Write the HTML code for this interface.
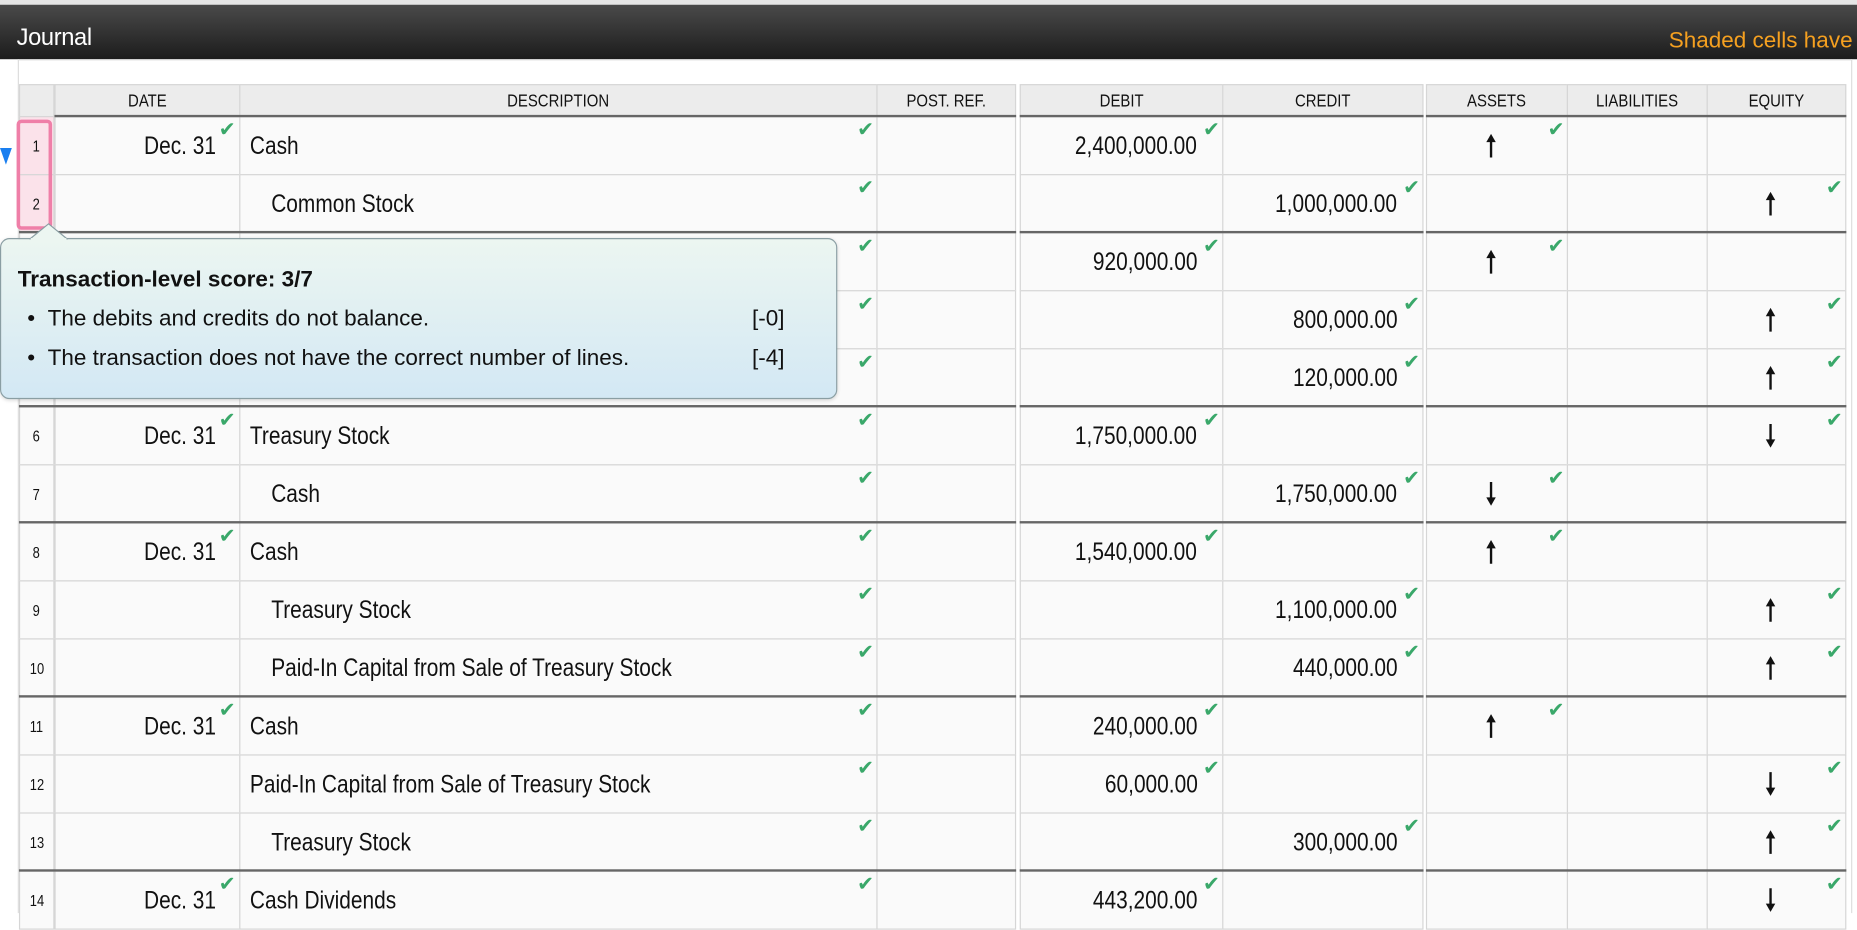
<!DOCTYPE html>
<html><head><meta charset="utf-8"><style>
html,body{margin:0;padding:0;width:1857px;height:901px;overflow:hidden;background:#fff}
#w{position:absolute;left:0;top:0;width:1568px;height:761px;transform:scale(1.18431);transform-origin:0 0;font-family:"Liberation Sans",sans-serif}
.bar{position:absolute;left:0;top:4px;width:1568px;height:46px;background:linear-gradient(#4a4a4a,#1c1c1c)}
.bar .t{position:absolute;left:14px;top:17px;color:#fff;font-size:20px;letter-spacing:-0.3px}
.bar .o{position:absolute;left:1409px;top:20px;color:#f5a020;font-size:19px;white-space:nowrap}
.c{position:absolute;box-sizing:border-box;border:1px solid #d6d6d6;background:#fafafa;height:50px;font-size:21px;line-height:49px;color:#111;white-space:nowrap}
.s{display:inline-block;transform:scaleX(.84);transform-origin:left center}
.c1 .s,.c4 .s,.c5 .s{transform-origin:right center}
.h{background:#ececec;height:28px;line-height:27px;font-size:15px;text-align:center!important;top:71px;padding:0!important}
.h .s{transform-origin:center center}
.c0{left:16px;width:30px;text-align:center;font-size:13px}
.c0 .s{transform-origin:center center}
.c1{left:46px;width:157px;text-align:right;padding-right:20px}
.c2{left:202px;width:539px;padding-left:8px}
.c3{left:740px;width:118px}
.c4{left:861px;width:172px;text-align:right;padding-right:21px}
.c5{left:1032px;width:170px;text-align:right;padding-right:21px}
.c6{left:1204px;width:120px}
.c7{left:1323px;width:119px}
.c8{left:1441px;width:118px}
.in{padding-left:26px}
.k{position:absolute;right:2px;top:-13px;color:#3aa86a;font-size:17px;font-family:"DejaVu Sans",sans-serif}
.c1 .k{right:3px}
.u,.d{position:absolute;top:13px;width:10px;height:22px}
.c6 .u,.c6 .d{left:49px}
.c8 .u,.c8 .d{left:48px}
.L{position:absolute;height:2px;background:#666}
</style></head><body><div id="w">
<svg width="0" height="0" style="position:absolute"><defs>
<symbol id="up" viewBox="0 0 10 22"><path d="M5 21V4" stroke="#111" stroke-width="2" fill="none"/><path d="M1 8L5 1L9 8Z" fill="#111"/></symbol>
<symbol id="dn" viewBox="0 0 10 22"><path d="M5 1V18" stroke="#111" stroke-width="2" fill="none"/><path d="M1 14L5 21L9 14Z" fill="#111"/></symbol>
</defs></svg>
<div style="position:absolute;left:0;top:0;width:1568px;height:4px;background:#e6e6e6"></div>
<div class="bar"><span class="t">Journal</span><span class="o">Shaded cells have</span></div>
<div style="position:absolute;left:15px;top:50px;width:1547px;height:720px;border-left:1px solid #ddd;border-right:1px solid #ddd;border-top:1px solid #ddd"></div>

<div class="c h c0"></div><div class="c h c1"><span class="s">DATE</span></div><div class="c h c2"><span class="s">DESCRIPTION</span></div><div class="c h c3"><span class="s">POST. REF.</span></div><div class="c h c4"><span class="s">DEBIT</span></div><div class="c h c5"><span class="s">CREDIT</span></div><div class="c h c6"><span class="s">ASSETS</span></div><div class="c h c7"><span class="s">LIABILITIES</span></div><div class="c h c8"><span class="s">EQUITY</span></div>

<div style="position:absolute;top:98px;left:0;width:1568px">
<div style="position:absolute;top:0"><div class="c c0" style="background:#fbe2ea"><span class="s">1</span></div><div class="c c1"><span class="s">Dec. 31</span><span class="k">✔</span></div><div class="c c2"><span class="s">Cash</span><span class="k">✔</span></div><div class="c c3"></div><div class="c c4"><span class="s">2,400,000.00</span><span class="k">✔</span></div><div class="c c5"></div><div class="c c6"><svg class="u"><use href="#up"/></svg><span class="k">✔</span></div><div class="c c7"></div><div class="c c8"></div></div>
<div style="position:absolute;top:49px"><div class="c c0" style="background:#fbe2ea"><span class="s">2</span></div><div class="c c1"></div><div class="c c2 in"><span class="s">Common Stock</span><span class="k">✔</span></div><div class="c c3"></div><div class="c c4"></div><div class="c c5"><span class="s">1,000,000.00</span><span class="k">✔</span></div><div class="c c6"></div><div class="c c7"></div><div class="c c8"><svg class="u"><use href="#up"/></svg><span class="k">✔</span></div></div>
<div style="position:absolute;top:98px"><div class="c c0"><span class="s">3</span></div><div class="c c1"></div><div class="c c2"><span class="k">✔</span></div><div class="c c3"></div><div class="c c4"><span class="s">920,000.00</span><span class="k">✔</span></div><div class="c c5"></div><div class="c c6"><svg class="u"><use href="#up"/></svg><span class="k">✔</span></div><div class="c c7"></div><div class="c c8"></div></div>
<div style="position:absolute;top:147px"><div class="c c0"><span class="s">4</span></div><div class="c c1"></div><div class="c c2 in"><span class="k">✔</span></div><div class="c c3"></div><div class="c c4"></div><div class="c c5"><span class="s">800,000.00</span><span class="k">✔</span></div><div class="c c6"></div><div class="c c7"></div><div class="c c8"><svg class="u"><use href="#up"/></svg><span class="k">✔</span></div></div>
<div style="position:absolute;top:196px"><div class="c c0"><span class="s">5</span></div><div class="c c1"></div><div class="c c2 in"><span class="k">✔</span></div><div class="c c3"></div><div class="c c4"></div><div class="c c5"><span class="s">120,000.00</span><span class="k">✔</span></div><div class="c c6"></div><div class="c c7"></div><div class="c c8"><svg class="u"><use href="#up"/></svg><span class="k">✔</span></div></div>
<div style="position:absolute;top:245px"><div class="c c0"><span class="s">6</span></div><div class="c c1"><span class="s">Dec. 31</span><span class="k">✔</span></div><div class="c c2"><span class="s">Treasury Stock</span><span class="k">✔</span></div><div class="c c3"></div><div class="c c4"><span class="s">1,750,000.00</span><span class="k">✔</span></div><div class="c c5"></div><div class="c c6"></div><div class="c c7"></div><div class="c c8"><svg class="d"><use href="#dn"/></svg><span class="k">✔</span></div></div>
<div style="position:absolute;top:294px"><div class="c c0"><span class="s">7</span></div><div class="c c1"></div><div class="c c2 in"><span class="s">Cash</span><span class="k">✔</span></div><div class="c c3"></div><div class="c c4"></div><div class="c c5"><span class="s">1,750,000.00</span><span class="k">✔</span></div><div class="c c6"><svg class="d"><use href="#dn"/></svg><span class="k">✔</span></div><div class="c c7"></div><div class="c c8"></div></div>
<div style="position:absolute;top:343px"><div class="c c0"><span class="s">8</span></div><div class="c c1"><span class="s">Dec. 31</span><span class="k">✔</span></div><div class="c c2"><span class="s">Cash</span><span class="k">✔</span></div><div class="c c3"></div><div class="c c4"><span class="s">1,540,000.00</span><span class="k">✔</span></div><div class="c c5"></div><div class="c c6"><svg class="u"><use href="#up"/></svg><span class="k">✔</span></div><div class="c c7"></div><div class="c c8"></div></div>
<div style="position:absolute;top:392px"><div class="c c0"><span class="s">9</span></div><div class="c c1"></div><div class="c c2 in"><span class="s">Treasury Stock</span><span class="k">✔</span></div><div class="c c3"></div><div class="c c4"></div><div class="c c5"><span class="s">1,100,000.00</span><span class="k">✔</span></div><div class="c c6"></div><div class="c c7"></div><div class="c c8"><svg class="u"><use href="#up"/></svg><span class="k">✔</span></div></div>
<div style="position:absolute;top:441px"><div class="c c0"><span class="s">10</span></div><div class="c c1"></div><div class="c c2 in"><span class="s">Paid-In Capital from Sale of Treasury Stock</span><span class="k">✔</span></div><div class="c c3"></div><div class="c c4"></div><div class="c c5"><span class="s">440,000.00</span><span class="k">✔</span></div><div class="c c6"></div><div class="c c7"></div><div class="c c8"><svg class="u"><use href="#up"/></svg><span class="k">✔</span></div></div>
<div style="position:absolute;top:490px"><div class="c c0"><span class="s">11</span></div><div class="c c1"><span class="s">Dec. 31</span><span class="k">✔</span></div><div class="c c2"><span class="s">Cash</span><span class="k">✔</span></div><div class="c c3"></div><div class="c c4"><span class="s">240,000.00</span><span class="k">✔</span></div><div class="c c5"></div><div class="c c6"><svg class="u"><use href="#up"/></svg><span class="k">✔</span></div><div class="c c7"></div><div class="c c8"></div></div>
<div style="position:absolute;top:539px"><div class="c c0"><span class="s">12</span></div><div class="c c1"></div><div class="c c2"><span class="s">Paid-In Capital from Sale of Treasury Stock</span><span class="k">✔</span></div><div class="c c3"></div><div class="c c4"><span class="s">60,000.00</span><span class="k">✔</span></div><div class="c c5"></div><div class="c c6"></div><div class="c c7"></div><div class="c c8"><svg class="d"><use href="#dn"/></svg><span class="k">✔</span></div></div>
<div style="position:absolute;top:588px"><div class="c c0"><span class="s">13</span></div><div class="c c1"></div><div class="c c2 in"><span class="s">Treasury Stock</span><span class="k">✔</span></div><div class="c c3"></div><div class="c c4"></div><div class="c c5"><span class="s">300,000.00</span><span class="k">✔</span></div><div class="c c6"></div><div class="c c7"></div><div class="c c8"><svg class="u"><use href="#up"/></svg><span class="k">✔</span></div></div>
<div style="position:absolute;top:637px"><div class="c c0"><span class="s">14</span></div><div class="c c1"><span class="s">Dec. 31</span><span class="k">✔</span></div><div class="c c2"><span class="s">Cash Dividends</span><span class="k">✔</span></div><div class="c c3"></div><div class="c c4"><span class="s">443,200.00</span><span class="k">✔</span></div><div class="c c5"></div><div class="c c6"></div><div class="c c7"></div><div class="c c8"><svg class="d"><use href="#dn"/></svg><span class="k">✔</span></div></div>
</div>

<div class="L" style="top:97px;left:46px;width:812px"></div><div class="L" style="top:97px;left:861px;width:341px"></div><div class="L" style="top:97px;left:1204px;width:355px"></div>
<div class="L" style="top:195px;left:16px;width:842px"></div><div class="L" style="top:195px;left:861px;width:341px"></div><div class="L" style="top:195px;left:1204px;width:355px"></div>
<div class="L" style="top:342px;left:16px;width:842px"></div><div class="L" style="top:342px;left:861px;width:341px"></div><div class="L" style="top:342px;left:1204px;width:355px"></div>
<div class="L" style="top:440px;left:16px;width:842px"></div><div class="L" style="top:440px;left:861px;width:341px"></div><div class="L" style="top:440px;left:1204px;width:355px"></div>
<div class="L" style="top:587px;left:16px;width:842px"></div><div class="L" style="top:587px;left:861px;width:341px"></div><div class="L" style="top:587px;left:1204px;width:355px"></div>
<div class="L" style="top:734px;left:16px;width:842px"></div><div class="L" style="top:734px;left:861px;width:341px"></div><div class="L" style="top:734px;left:1204px;width:355px"></div>

<div style="position:absolute;left:14px;top:101px;width:30px;height:93px;box-sizing:border-box;border:3px solid #ef7fa8;border-radius:4px"></div>
<div style="position:absolute;left:0;top:125px;width:0;height:0;border-left:5px solid transparent;border-right:5px solid transparent;border-top:14px solid #1a7ff0"></div>

<div style="position:absolute;left:0;top:201px;width:707px;height:136px;box-sizing:border-box;border:1px solid #8a9ea3;border-radius:8px;background:linear-gradient(#ecf6f1,#d3e8f4);box-shadow:0 1px 3px rgba(0,0,0,0.15);font-size:19px;color:#111">
<div style="position:absolute;left:14px;top:24px;font-weight:bold">Transaction-level score: 3/7</div>
<div style="position:absolute;left:22px;top:57px">•&nbsp;&nbsp;The debits and credits do not balance.</div>
<div style="position:absolute;left:634px;top:57px">[-0]</div>
<div style="position:absolute;left:22px;top:90px">•&nbsp;&nbsp;The transaction does not have the correct number of lines.</div>
<div style="position:absolute;left:634px;top:90px">[-4]</div>
</div>
<svg style="position:absolute;left:24px;top:188px" width="34" height="15"><path d="M1 14 L17 1 L33 14" fill="#ecf6f1" stroke="#8a9ea3" stroke-width="1"/><rect x="2" y="13" width="30" height="3" fill="#ecf6f1"/></svg>
</div></body></html>
